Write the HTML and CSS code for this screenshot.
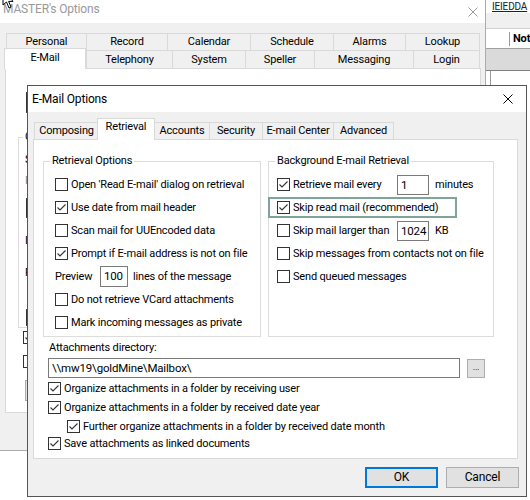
FILE: index.html
```html
<!DOCTYPE html>
<html lang="en">
<head>
  <meta charset="UTF-8" />
  <title>E-Mail Options</title>
  <link rel="stylesheet" href="styles.css">
</head>
<body>
<div class="desktop">

  <!-- main app grid, partly visible behind the dialogs -->
  <div class="grid-app">
    <div class="grid-link">IEIEDDA</div>
    <div class="grid-gap"></div>
    <div class="grid-head"><span class="grid-col">Not</span></div>
    <div class="grid-row"></div>
    <div class="grid-body"><div class="grid-line"></div></div>
  </div>

  <!-- user options window (inactive) -->
  <div class="window back">
    <div class="titlebar">
      <span class="title">MASTER's Options</span>
      <span class="close">
        <svg width="10" height="10" viewBox="0 0 10 10"><path d="M0.5 0.5L9.5 9.5M9.5 0.5L0.5 9.5" stroke="#999" stroke-width="1"/></svg>
      </span>
    </div>
    <div class="win-body">
      <div class="tabrow tabrow-top">
        <div class="tab">Personal</div>
        <div class="tab">Record</div>
        <div class="tab">Calendar</div>
        <div class="tab">Schedule</div>
        <div class="tab">Alarms</div>
        <div class="tab">Lookup</div>
      </div>
      <div class="tabrow tabrow-bottom">
        <div class="tab selected">E-Mail</div>
        <div class="tab">Telephony</div>
        <div class="tab">System</div>
        <div class="tab">Speller</div>
        <div class="tab">Messaging</div>
        <div class="tab">Login</div>
      </div>
      <div class="back-panel">
        <div class="b-input b-input-top"></div>
        <fieldset class="b-group">
          <legend>C</legend>
          <div class="b-line">S</div>
          <div class="b-line dim">F</div>
          <div class="b-input b-input-mid"></div>
          <div class="b-line b-line-a">I</div>
          <div class="b-line b-line-b">F</div>
          <div class="b-input b-input-low"></div>
        </fieldset>
        <div class="b-check b-check-a"><span class="cb"><svg width="11" height="11" viewBox="0 0 11 11"><polyline points="1.5,5.5 4,8 9.5,2.5" fill="none" stroke="#333" stroke-width="1.1"/></svg></span></div>
        <div class="b-check b-check-b"><span class="cb"></span></div>
        <div class="b-button"></div>
      </div>
    </div>
  </div>

  <!-- E-Mail Options dialog (active) -->
  <div class="window front">
    <div class="titlebar">
      <span class="title">E-Mail Options</span>
      <span class="close">
        <svg width="10" height="10" viewBox="0 0 10 10"><path d="M0.5 0.5L9.5 9.5M9.5 0.5L0.5 9.5" stroke="#000" stroke-width="1"/></svg>
      </span>
    </div>
    <div class="dlg-body">
      <div class="tabs">
        <div class="ftab t-composing">Composing</div>
        <div class="ftab t-retrieval selected">Retrieval</div>
        <div class="ftab t-accounts">Accounts</div>
        <div class="ftab t-security">Security</div>
        <div class="ftab t-center">E-mail Center</div>
        <div class="ftab t-advanced">Advanced</div>
      </div>

      <div class="tab-panel">
        <div class="groups">
          <fieldset class="group group-left">
            <legend>Retrieval Options</legend>
            <div class="rows">
              <div class="row"><span class="cb"></span>Open 'Read E-mail' dialog on retrieval</div>
              <div class="row"><span class="cb"><svg width="11" height="11" viewBox="0 0 11 11"><polyline points="1.5,5.5 4,8 9.5,2.5" fill="none" stroke="#333" stroke-width="1.1"/></svg></span>Use date from mail header</div>
              <div class="row"><span class="cb"></span>Scan mail for UUEncoded data</div>
              <div class="row"><span class="cb"><svg width="11" height="11" viewBox="0 0 11 11"><polyline points="1.5,5.5 4,8 9.5,2.5" fill="none" stroke="#333" stroke-width="1.1"/></svg></span>Prompt if E-mail address is not on file</div>
              <div class="row"><span class="lbl-preview">Preview</span><span class="num num-preview">100</span><span class="after">lines of the message</span></div>
              <div class="row"><span class="cb"></span>Do not retrieve VCard attachments</div>
              <div class="row"><span class="cb"></span>Mark incoming messages as private</div>
            </div>
          </fieldset>

          <fieldset class="group group-right">
            <legend>Background E-mail Retrieval</legend>
            <div class="rows">
              <div class="row"><span class="cb"><svg width="11" height="11" viewBox="0 0 11 11"><polyline points="1.5,5.5 4,8 9.5,2.5" fill="none" stroke="#333" stroke-width="1.1"/></svg></span><span class="lbl-fixed">Retrieve mail every</span><span class="num num-small">1</span><span class="after">minutes</span></div>
              <div class="row focus"><span class="cb"><svg width="11" height="11" viewBox="0 0 11 11"><polyline points="1.5,5.5 4,8 9.5,2.5" fill="none" stroke="#333" stroke-width="1.1"/></svg></span>Skip read mail (recommended)</div>
              <div class="row"><span class="cb"></span><span class="lbl-fixed">Skip mail larger than</span><span class="num num-small">1024</span><span class="after">KB</span></div>
              <div class="row"><span class="cb"></span>Skip messages from contacts not on file</div>
              <div class="row"><span class="cb"></span>Send queued messages</div>
            </div>
          </fieldset>
        </div>

        <div class="attach">
          <div class="attach-label">Attachments directory:</div>
          <div class="attach-path">
            <span class="path-box">\\mw19\goldMine\Mailbox\</span>
            <span class="browse">...</span>
          </div>
          <div class="arow arow-1"><span class="cb"><svg width="11" height="11" viewBox="0 0 11 11"><polyline points="1.5,5.5 4,8 9.5,2.5" fill="none" stroke="#333" stroke-width="1.1"/></svg></span>Organize attachments in a folder by receiving user</div>
          <div class="arow arow-2"><span class="cb"><svg width="11" height="11" viewBox="0 0 11 11"><polyline points="1.5,5.5 4,8 9.5,2.5" fill="none" stroke="#333" stroke-width="1.1"/></svg></span>Organize attachments in a folder by received date year</div>
          <div class="arow arow-3 nested"><span class="cb"><svg width="11" height="11" viewBox="0 0 11 11"><polyline points="1.5,5.5 4,8 9.5,2.5" fill="none" stroke="#333" stroke-width="1.1"/></svg></span>Further organize attachments in a folder by received date month</div>
          <div class="arow arow-4"><span class="cb"><svg width="11" height="11" viewBox="0 0 11 11"><polyline points="1.5,5.5 4,8 9.5,2.5" fill="none" stroke="#333" stroke-width="1.1"/></svg></span>Save attachments as linked documents</div>
        </div>
      </div>

      <div class="buttons">
        <div class="btn default">OK</div>
        <div class="btn">Cancel</div>
      </div>
    </div>
  </div>

  <!-- mouse pointer -->
  <svg class="cursor" width="16" height="10" viewBox="0 0 16 10">
    <path d="M3 -11 L3 5 L6.5 2 L9 8 L11 7 L8.6 1.4 L13 1.4 Z" fill="#fff" stroke="#000" stroke-width="1"/>
  </svg>

</div>
</body>
</html>
```

FILE: styles.css
```css
body {
  margin: 0;
  font-family: "Segoe UI", Roboto, sans-serif;
  font-size: 11px;
  letter-spacing: -0.17px;
  color: #000;
  background: #fff;
}
.desktop {
  position: relative;
  width: 530px;
  height: 500px;
  overflow: hidden;
  background: #fff;
}
.cursor {
  position: absolute;
  left: 0;
  top: 0;
}

/* grid of the main app */
.grid-app {
  position: absolute;
  left: 486px;
  top: 0;
  width: 44px;
  height: 500px;
  background: #fff;
}
.grid-link {
  height: 13px;
  line-height: 13px;
  font-size: 10px;
  padding-left: 6px;
  text-decoration: underline;
  color: #222;
  overflow: hidden;
}
.grid-gap {
  height: 15px;
  background: #f0f0f0;
  border-bottom: 1px solid #d0d0d0;
}
.grid-head {
  height: 19px;
  border-bottom: 1px solid #a0a0a0;
  display: flex;
  align-items: center;
  padding-left: 23px;
}
.grid-col {
  border-left: 1px solid #999;
  padding-left: 3px;
  line-height: 14px;
  font-weight: bold;
  white-space: nowrap;
}
.grid-row {
  height: 21px;
  background: #dadada;
  border-bottom: 1px solid #808080;
}
.grid-line {
  margin-left: 4px;
  height: 20px;
  border-left: 1px solid #999;
}

/* windows */
.window {
  position: absolute;
  box-sizing: border-box;
  background: #f0f0f0;
}
.titlebar {
  display: flex;
  align-items: center;
  background: #fff;
}
.close {
  margin-left: auto;
  display: flex;
  justify-content: center;
}

.back {
  left: 0;
  top: 0;
  width: 486px;
  height: 451px;
  border-right: 1px solid #ababab;
  border-bottom: 1px solid #ababab;
}
.back .titlebar {
  height: 23px;
  align-items: flex-start;
}
.back .title {
  padding: 2px 0 0 3px;
  font-size: 12px;
  color: #999;
}
.back .close {
  width: 24px;
  padding-top: 7px;
}
.win-body {
  padding: 10px 0 0 5px;
}
.tabrow {
  display: grid;
  margin-left: 1px;
  width: 473px;
}
.tabrow .tab {
  border: 1px solid #d9d9d9;
  border-bottom: none;
  margin-right: -1px;
  text-align: center;
  background: #f0f0f0;
  white-space: nowrap;
}
.tabrow-top {
  grid-template-columns: 80px 81px 83px 83px 72px 74px;
  height: 17px;
}
.tabrow-top .tab {
  line-height: 16px;
}
.tabrow-bottom {
  grid-template-columns: 80px 86px 73px 69px 99px 66px;
  height: 18px;
}
.tabrow-bottom .tab {
  line-height: 17px;
}
.tabrow .tab.selected {
  background: #fff;
  margin: -2px 0 -1px -2px;
  position: relative;
  z-index: 1;
  line-height: 17px;
}
.back-panel {
  width: 476px;
  height: 345px;
  box-sizing: border-box;
  border: 1px solid #d9d9d9;
  background: #fff;
  padding-left: 1px;
}
.b-input {
  background: #fff;
  border: 1px solid #7a7a7a;
  border-left: 2px solid #333;
  box-sizing: border-box;
  width: 120px;
  padding-left: 3px;
}
.b-input-top {
  margin: 23px 0 0 19px;
  height: 21px;
}
.b-group {
  margin: 17px 0 0 11px;
  padding: 0 0 0 6px;
  width: 400px;
  height: 198px;
  box-sizing: border-box;
  border: 1px solid #dcdcdc;
}
.b-group legend {
  margin-left: -2px;
  padding: 0 2px;
  line-height: 14px;
}
.b-line {
  line-height: 15px;
  margin-top: 8px;
}
.b-line.dim {
  color: #8a8a8a;
  margin-top: 6px;
}
.b-input-mid {
  margin: 10px 0 0 1px;
  height: 20px;
}
.b-line-a {
  margin-top: 15px;
}
.b-line-b {
  margin-top: 17px;
}
.b-input-low {
  margin: 29px 0 0 1px;
  height: 17px;
}
.b-check {
  display: flex;
  align-items: center;
  margin-left: 16px;
  height: 13px;
}
.b-check-a {
  margin-top: 3px;
}
.b-check-b {
  margin-top: 11px;
}
.b-button {
  margin: 12px 0 0 18px;
  width: 75px;
  height: 21px;
  box-sizing: border-box;
  border: 1px solid #adadad;
  background: #e1e1e1;
}

/* front dialog */
.front {
  left: 27px;
  top: 85px;
  width: 500px;
  height: 412px;
  border: 1px solid #555;
  display: flex;
  flex-direction: column;
}
.front .titlebar {
  height: 26px;
  flex: none;
}
.front .title {
  padding-left: 4px;
  font-size: 12px;
}
.front .close {
  width: 36px;
}
.dlg-body {
  padding: 6px 8px 0 5px;
}
.tabs {
  display: flex;
  align-items: flex-end;
  height: 21px;
  margin-left: 1px;
  position: relative;
  z-index: 1;
}
.ftab {
  height: 17px;
  box-sizing: border-box;
  border: 1px solid #d9d9d9;
  border-bottom: none;
  margin-right: -1px;
  background: #f0f0f0;
  text-align: center;
  line-height: 15px;
  white-space: nowrap;
}
.ftab.selected {
  height: 22px;
  margin: 0 -1px -1px -1px;
  background: #fff;
  padding-top: 1px;
  line-height: 14px;
  position: relative;
  z-index: 1;
}
.t-composing { width: 65px; }
.t-retrieval { width: 58px; }
.t-accounts { width: 56px; }
.t-security { width: 54px; }
.t-center { width: 72px; }
.t-advanced { width: 61px; }

.tab-panel {
  height: 320px;
  box-sizing: border-box;
  border: 1px solid #d9d9d9;
  background: #fff;
}
.groups {
  display: flex;
  gap: 7px;
  margin: 14px 0 0 9px;
}
.group {
  margin: 0;
  padding: 0;
  height: 183px;
  box-sizing: border-box;
  border: 1px solid #dcdcdc;
  min-width: 0;
}
.group legend {
  margin-left: 6px;
  padding: 0 2px;
  line-height: 14px;
}
.group-left { width: 218px; }
.group-right { width: 226px; }
.rows {
  padding: 5px 0 0 11px;
}
.group-right .rows {
  padding-left: 8px;
}
.row {
  display: flex;
  align-items: center;
  height: 23px;
  white-space: nowrap;
}
.row.focus {
  height: 21px;
  margin: 1px 0 1px -9px;
  width: 189px;
  box-sizing: border-box;
  border: 2px solid #7fa59b;
  padding-left: 7px;
}
.cb {
  flex: none;
  width: 13px;
  height: 13px;
  box-sizing: border-box;
  border: 1px solid #333;
  background: #fff;
  margin-right: 3px;
  display: flex;
  align-items: center;
  justify-content: center;
}
.cb svg {
  display: block;
}
.lbl-preview {
  width: 45px;
}
.lbl-fixed {
  width: 104px;
}
.num {
  box-sizing: border-box;
  height: 20px;
  line-height: 18px;
  border: 1px solid #7a7a7a;
  background: #fff;
  padding-left: 3px;
  font-size: 11.5px;
}
.num-preview {
  width: 28px;
  height: 21px;
  line-height: 19px;
}
.num-small {
  width: 32px;
}
.after {
  margin-left: 6px;
}
.num-preview + .after {
  margin-left: 5px;
}

.attach {
  padding-left: 14px;
}
.attach-label {
  margin-top: 4px;
  line-height: 14px;
  padding-left: 1px;
}
.attach-path {
  display: flex;
  align-items: flex-start;
  margin-top: 3px;
}
.path-box {
  width: 412px;
  height: 20px;
  box-sizing: border-box;
  border: 1px solid #7a7a7a;
  padding-left: 3px;
  line-height: 18px;
  font-size: 11.5px;
}
.browse {
  margin: 1px 0 0 7px;
  width: 18px;
  height: 19px;
  box-sizing: border-box;
  border: 1px solid #adadad;
  background: #e1e1e1;
  text-align: center;
  line-height: 15px;
  font-size: 9px;
}
.arow {
  display: flex;
  align-items: center;
  white-space: nowrap;
}
.arow-1 { height: 19px; margin-top: 1px; }
.arow-2 { height: 19px; }
.arow-3 { height: 18px; }
.arow-4 { height: 17px; }
.arow.nested {
  padding-left: 19px;
}

.buttons {
  display: flex;
  justify-content: flex-end;
  gap: 8px;
  margin: 8px -1px 0 0;
}
.btn {
  width: 73px;
  height: 21px;
  box-sizing: border-box;
  border: 1px solid #adadad;
  background: #e1e1e1;
  text-align: center;
  line-height: 19px;
  font-size: 12px;
}
.btn.default {
  border: 2px solid #0078d7;
  line-height: 17px;
}
```
